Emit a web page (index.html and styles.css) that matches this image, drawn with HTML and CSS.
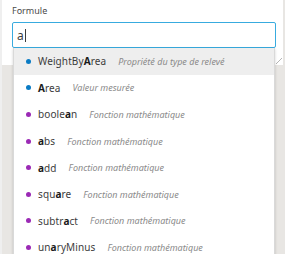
FILE: index.html
```html
<!DOCTYPE html>
<html lang="fr">
<head>
<meta charset="UTF-8">
<title>Formule</title>
<link rel="stylesheet" href="styles.css">
</head>
<body>
<div class="page">
  <div class="panel">
    <label class="field-label" for="formula">Formule</label>
    <div class="input-box"><span class="typed">a</span><span class="caret"></span></div>
    <span class="resize"></span>
  </div>
  <ul class="suggestions">
    <li class="item selected"><span class="dot prop"></span><span class="name">WeightBy<b>A</b>rea</span><span class="desc">Propriété du type de relevé</span></li>
    <li class="item"><span class="dot prop"></span><span class="name"><b>A</b>rea</span><span class="desc">Valeur mesurée</span></li>
    <li class="item"><span class="dot func"></span><span class="name">boole<b>a</b>n</span><span class="desc">Fonction mathématique</span></li>
    <li class="item"><span class="dot func"></span><span class="name"><b>a</b>bs</span><span class="desc">Fonction mathématique</span></li>
    <li class="item"><span class="dot func"></span><span class="name"><b>a</b>dd</span><span class="desc">Fonction mathématique</span></li>
    <li class="item"><span class="dot func"></span><span class="name">squ<b>a</b>re</span><span class="desc">Fonction mathématique</span></li>
    <li class="item"><span class="dot func"></span><span class="name">subtr<b>a</b>ct</span><span class="desc">Fonction mathématique</span></li>
    <li class="item"><span class="dot func"></span><span class="name">un<b>a</b>ryMinus</span><span class="desc">Fonction mathématique</span></li>
  </ul>
</div>
</body>
</html>
```

FILE: styles.css
```css
html, body {
  margin: 0;
  height: 100%;
}
body {
  font-family: 'Noto Sans', sans-serif;
  background-color: #e8e6e3;
  overflow: hidden;
}
.page {
  position: relative;
  height: 100%;
  border-left: 2px solid #efefef;
}
.panel {
  position: relative;
  background-color: #fff;
  margin-right: 2px;
  height: 65px;
  padding: 4px 0 0 10px;
  box-sizing: border-box;
}
.field-label {
  display: block;
  font-size: 9px;
  color: #4a4a4a;
  line-height: 14px;
  margin-bottom: 4px;
}
.input-box {
  width: 264px;
  height: 26px;
  box-sizing: border-box;
  border: 1px solid #38abdf;
  border-radius: 2px;
  display: flex;
  align-items: center;
  padding-left: 4px;
  font-size: 12px;
  color: #3c3c3c;
}
.caret {
  width: 1px;
  height: 13px;
  background-color: #3c3c3c;
  margin-left: 1px;
}
.resize {
  position: absolute;
  right: 1px;
  bottom: 1px;
  width: 6px;
  height: 6px;
  background: linear-gradient(135deg, transparent 45%, #b5b5b5 45%, #b5b5b5 55%, transparent 55%);
}
/* dropdown lies over the page below the field */
.suggestions {
  position: absolute;
  top: 48px;
  left: 11px;
  width: 262px;
  margin: 0;
  padding: 0;
  list-style: none;
  background-color: #fff;
  border: 1px solid #d9d9d9;
  border-top: none;
  border-radius: 0 0 2px 2px;
  box-sizing: border-box;
  box-shadow: 0 1px 3px rgba(0, 0, 0, 0.18);
}
.item {
  display: flex;
  align-items: center;
  height: 26.6px;
  padding-left: 12px;
  white-space: nowrap;
}
.item.selected {
  background-color: #eeeeee;
}
.dot {
  width: 5px;
  height: 5px;
  border-radius: 50%;
  margin-right: 7px;
}
.dot.prop {
  background-color: #0a7bc4;
}
.dot.func {
  background-color: #9b2ab5;
}
.name {
  font-size: 10px;
  color: #3c3c3c;
  letter-spacing: 0.1px;
  margin-right: 12px;
}
.name b {
  color: #1a1a1a;
}
.desc {
  font-size: 9px;
  font-style: italic;
  color: #8a8a8a;
}
```
